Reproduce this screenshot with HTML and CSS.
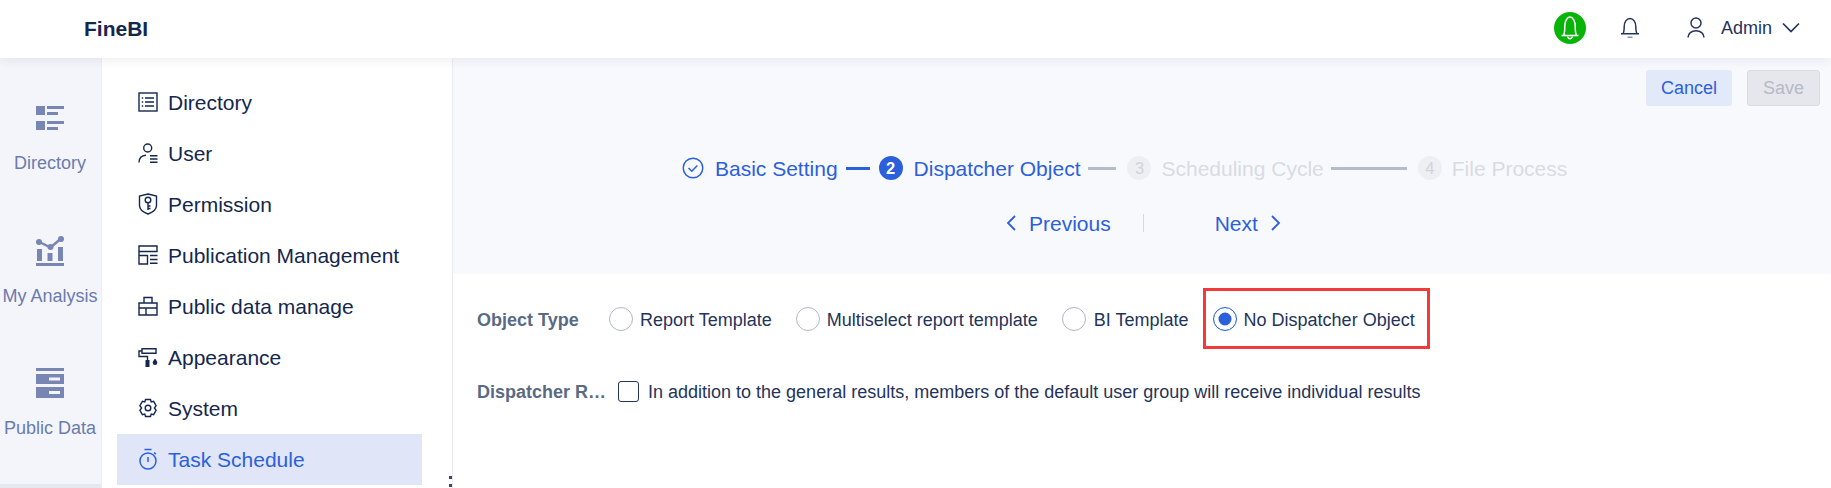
FILE: index.html
```html
<!DOCTYPE html>
<html lang="en">
<head>
<meta charset="utf-8">
<title>FineBI</title>
<link rel="stylesheet" href="styles.css">
</head>
<body>
<header class="topbar">
  <div class="brand">FineBI</div>
  <div class="top-actions">
    <span class="green-bell">
      <svg width="32" height="32" viewBox="0 0 32 32" fill="none" stroke="#fff" stroke-width="1.5"><path d="M7.500 23.500h17M9.500 23.500c1.200-2 1.300-4.500 1.300-9.500 0-4.500 2.200-9 5.200-9s5.200 4.500 5.200 9c0 5 .1 7.500 1.300 9.500"/><path d="M13.500 24.500c.5 1.500 1.300 2.200 2.500 2.200s2-.7 2.500-2.200"/></svg>
    </span>
    <svg class="plain-bell" width="20" height="22" viewBox="0 0 20 22" fill="none" stroke="#24345a" stroke-width="1.500"><path d="M1 16.800h18M3 16.500c1.200-1.500 1.200-3 1.200-7C4.200 5 6.500 1.500 10 1.500s5.800 3.500 5.800 8c0 4 0 5.500 1.200 7"/><path d="M7.500 20.300h5" stroke="#8a93ad"/></svg>
    <svg class="user-icon" width="18" height="21" viewBox="0 0 18 21" fill="none" stroke="#24345a" stroke-width="1.500"><circle cx="9" cy="6" r="5"/><path d="M1 20.500c0-4 3.500-6.800 8-6.800s8 2.800 8 6.800"/></svg>
    <span class="admin">Admin</span>
    <svg width="18" height="11" viewBox="0 0 18 11" fill="none" stroke="#24345a" stroke-width="1.700"><path d="M1 1.500l8 8 8-8"/></svg>
  </div>
</header>

<div class="shell">
  <nav class="rail">
    <a class="rail-item">
      <svg width="28" height="28" viewBox="0 0 28 28" fill="#7886b4"><rect y="2" width="9" height="9"/><rect y="17" width="9" height="9"/><rect x="11" y="2" width="17" height="3"/><rect x="11" y="8" width="11" height="3"/><rect x="11" y="17" width="17" height="3"/><rect x="11" y="23" width="11" height="3"/></svg>
      <span>Directory</span>
    </a>
    <a class="rail-item">
      <svg width="28" height="30" viewBox="0 0 28 30" fill="#7886b4"><path d="M3.500 6l11 5.500L24.500 3" fill="none" stroke="#7886b4" stroke-width="2.500"/><circle cx="3" cy="6" r="3"/><circle cx="14.500" cy="11" r="3"/><circle cx="25" cy="3" r="3"/><rect x="1" y="13" width="5" height="12"/><rect x="11.500" y="17" width="5" height="8"/><rect x="22" y="11" width="5" height="14"/><rect y="27" width="28" height="3"/></svg>
      <span>My Analysis</span>
    </a>
    <a class="rail-item">
      <svg width="28" height="30" viewBox="0 0 28 30"><rect width="28" height="3" fill="#7886b4"/><path fill="#7886b4" d="M0 6h28v10H0zM0 19h28v11H0z"/><rect x="13" y="9.500" width="11" height="3" fill="#f3f5fa"/><rect x="13" y="23" width="11" height="3" fill="#f3f5fa"/></svg>
      <span>Public Data</span>
    </a>
  </nav>

  <aside class="menu">
    <a class="menu-item">
      <svg width="20" height="20" viewBox="0 0 20 20" fill="none" stroke="#14274e" stroke-width="1.400"><rect x="1" y="1" width="18" height="18"/><path d="M7 6h9M7 10h9M7 14h9"/><path d="M3.800 6h1.400M3.800 10h1.400M3.800 14h1.400"/></svg>
      <span class="menu-text">Directory</span>
    </a>
    <a class="menu-item">
      <svg width="20" height="20" viewBox="0 0 20 20" fill="none" stroke="#14274e" stroke-width="1.400"><circle cx="9.700" cy="5" r="4"/><path d="M1 19.500c0-4.500 2.500-7 7-7.300"/><path d="M12 12.800h7.500M12 16h7.500M12 19.200h7.500"/></svg>
      <span class="menu-text">User</span>
    </a>
    <a class="menu-item">
      <svg width="20" height="22" viewBox="0 0 20 22" fill="none" stroke="#14274e" stroke-width="1.400"><path d="M10 1l8.500 2v9.500c0 4-4 6.800-8.500 8.500-4.500-1.700-8.500-4.500-8.500-8.500V3z"/><circle cx="10" cy="7" r="2.800"/><path d="M10 10v7M10 13h2.500M10 15.500h2.500"/></svg>
      <span class="menu-text">Permission</span>
    </a>
    <a class="menu-item">
      <svg width="20" height="20" viewBox="0 0 20 20" fill="none" stroke="#14274e" stroke-width="1.400"><path d="M1 1h18v5.500H1zM1 6.500V19h8.500V10.500H1"/><path d="M12 10.500h7.500M12 14.500h7.500M12 18.300h7.500"/></svg>
      <span class="menu-text">Publication Management</span>
    </a>
    <a class="menu-item">
      <svg width="20" height="20" viewBox="0 0 20 20" fill="none" stroke="#14274e" stroke-width="1.400"><path d="M1 7h18v12H1zM6 7V1.500h8V7M1 12h18M8 12v7"/></svg>
      <span class="menu-text">Public data manage</span>
    </a>
    <a class="menu-item">
      <svg width="20" height="20" viewBox="0 0 20 20" fill="#14274e"><path d="M4 1.700h14v4.600H4z" fill="none" stroke="#14274e" stroke-width="1.400"/><path d="M4 4H1v5.500h8.500V13" fill="none" stroke="#14274e" stroke-width="1.400"/><rect x="7.500" y="13" width="4" height="7"/><path d="M17 11.500c1.400 2 2.300 3 2.300 4.300a2.300 2.300 0 0 1-4.600 0c0-1.300.9-2.300 2.300-4.300z"/></svg>
      <span class="menu-text">Appearance</span>
    </a>
    <a class="menu-item">
      <svg width="20" height="20" viewBox="0 0 20 20" fill="none" stroke="#14274e" stroke-width="1.400"><path d="M7.500 1.500h5l.7 2.400 2.400-.6 2.500 4.300-1.700 2.400 1.700 2.400-2.500 4.300-2.400-.6-.7 2.400h-5l-.7-2.400-2.400.6-2.500-4.300L3.600 10 1.900 7.600l2.500-4.300 2.400.6z"/><circle cx="10" cy="10" r="2.800"/></svg>
      <span class="menu-text">System</span>
    </a>
    <a class="menu-item active">
      <svg width="20" height="22" viewBox="0 0 20 22" fill="none" stroke="#2c60db" stroke-width="1.500"><circle cx="10" cy="13" r="8"/><path d="M6.500 1.500h7M10 9v5M16 4.500l1.800 1.800"/></svg>
      <span class="menu-text">Task Schedule</span>
    </a>
    <span class="grip"></span>
  </aside>

  <main class="main">
    <section class="panel">
      <div class="toolbar">
        <button class="btn btn-cancel">Cancel</button>
        <button class="btn btn-save">Save</button>
      </div>
      <div class="steps">
        <span class="step done">
          <svg width="22" height="22" viewBox="0 0 22 22" fill="none" stroke="#2c60db" stroke-width="1.500"><circle cx="11" cy="11" r="9.800"/><path d="M6.500 11l3.300 3.300 5.500-5.800"/></svg>
          <span class="nudge">Basic Setting</span>
        </span>
        <i class="line line-a on"></i>
        <span class="step current"><b class="num">2</b><span class="nudge">Dispatcher Object</span></span>
        <i class="line line-b"></i>
        <span class="step todo"><b class="num">3</b><span class="nudge">Scheduling Cycle</span></span>
        <i class="line line-c"></i>
        <span class="step todo"><b class="num">4</b><span class="nudge">File Process</span></span>
      </div>
      <div class="pager">
        <a class="page-link prev">
          <svg width="10" height="18" viewBox="0 0 10 18" fill="none" stroke="#2c60db" stroke-width="1.800"><path d="M9 2L2 9l7 7"/></svg>
          <span class="nudge">Previous</span>
        </a>
        <i class="page-sep"></i>
        <a class="page-link next">
          <span class="nudge">Next</span>
          <svg width="10" height="18" viewBox="0 0 10 18" fill="none" stroke="#2c60db" stroke-width="1.800"><path d="M1 2l7 7-7 7"/></svg>
        </a>
      </div>
    </section>

    <section class="form">
      <div class="form-row">
        <span class="form-label nudge">Object Type</span>
        <label class="radio"><i class="dot"></i><span class="nudge">Report Template</span></label>
        <label class="radio"><i class="dot"></i><span class="nudge">Multiselect report template</span></label>
        <label class="radio roomy"><i class="dot"></i><span class="nudge">BI Template</span></label>
        <label class="radio picked"><i class="dot"></i><span class="nudge">No Dispatcher Object</span></label>
      </div>
      <div class="form-row">
        <span class="form-label nudge">Dispatcher R…</span>
        <label class="check"><i class="box"></i><span class="nudge">In addition to the general results, members of the default user group will receive individual results</span></label>
      </div>
    </section>
  </main>
</div>
</body>
</html>
```
FILE: styles.css
```css
* { box-sizing: border-box; }
html, body { margin: 0; height: 488px; overflow: hidden; }
body { font-family: "Liberation Sans", Arial, sans-serif; color: #14274e; background: #fff; }
i { font-style: normal; display: block; }
svg { display: block; flex: none; }
.nudge { padding-top: 2px; }

.topbar { position: relative; z-index: 2; height: 58px; background: #fff; display: flex; align-items: center; justify-content: space-between; padding: 0 31px 0 84px; box-shadow: 0 2px 10px rgba(40, 50, 90, .09); }
.brand { font-size: 21px; font-weight: 700; color: #14274e; }
.top-actions { display: flex; align-items: center; padding-bottom: 3px; }
.green-bell { width: 32px; height: 32px; border-radius: 50%; background: #09b409; margin-right: 34px; }
.plain-bell { margin-right: 47px; }
.user-icon { margin-right: 16px; }
.admin { font-size: 18px; color: #24345a; margin-right: 10px; padding-top: 2px; }

.shell { display: flex; height: 430px; }

.rail { width: 102px; flex: none; background: #f3f5fa; border-right: 1px solid #eceef4; border-bottom: 4px solid #e6e8ef; padding-top: 46px; }
.rail-item { height: 132px; display: flex; flex-direction: column; align-items: center; padding-right: 1px; font-size: 18px; line-height: 21px; color: #6b7bae; }
.rail-item span { white-space: nowrap; margin-top: 21px; }
.rail-item:nth-child(n+2) span { margin-top: 20px; }

.menu { position: relative; width: 351px; flex: none; background: #fff; border-right: 1px solid #e9ebf1; padding: 18.500px 30px 0 15px; }
.menu-item { height: 51px; display: flex; align-items: center; gap: 10.500px; padding-left: 20.500px; font-size: 21px; color: #14274e; white-space: nowrap; }
.menu-text { padding-top: 2px; }
.menu-item.active { background: #e0e6f8; color: #2c60db; }
.grip { position: absolute; right: 0; top: 418px; width: 3px; height: 11px; border-top: 3px solid #3a4660; border-bottom: 3px solid #3a4660; }

.main { flex: 1; min-width: 0; display: flex; flex-direction: column; }
.panel { height: 216px; background: #f8f9fd; padding-top: 12px; }
.toolbar { display: flex; justify-content: flex-end; gap: 15px; padding-right: 11px; }
.btn { height: 36px; border-radius: 3px; font: 18px "Liberation Sans", Arial, sans-serif; padding: 0; }
.btn-cancel { width: 86px; background: #e2e9f8; border: 0; color: #2c60db; }
.btn-save { width: 73px; background: #e5e7ec; border: 1px solid #d9dce3; color: #b4bac8; }

.steps { display: flex; align-items: center; height: 24px; margin: 50px 0 0 229px; font-size: 21px; white-space: nowrap; }
.step { display: flex; align-items: center; gap: 11px; }
.step.done { color: #2c60db; }
.step.current { color: #2c60db; }
.step.todo { color: #d8dbe3; gap: 10px; }
.num { width: 24px; height: 24px; border-radius: 50%; display: flex; align-items: center; justify-content: center; font-size: 16.500px; }
.current .num { background: #2c60db; color: #fff; }
.todo .num { background: #eeeff3; color: #d0d3dc; font-weight: 400; }
.line { height: 3px; background: #b5bbca; margin: 0 11px 0 8px; }
.line.on { background: #2c60db; }
.line-a { width: 24px; margin-right: 9px; }
.line-b { width: 28px; margin-right: 11px; }
.line-c { width: 76px; margin: 0 11px 0 7px; }

.pager { display: flex; align-items: center; height: 24px; margin: 31px 0 0 553px; font-size: 21px; color: #2c60db; }
.page-link { display: flex; align-items: center; gap: 13px; }
.page-sep { width: 1px; height: 18px; background: #d5d8e0; margin: 0 71px 0 32px; }

.form { padding: 33px 0 0 24px; font-size: 18px; color: #24345a; }
.form-row { display: flex; align-items: center; height: 24px; margin-bottom: 48.500px; white-space: nowrap; }
.form-label { width: 132px; flex: none; font-weight: 700; color: #5a6a84; }
.radio { position: relative; display: flex; align-items: center; gap: 7px; margin-right: 24px; }
.radio.roomy { gap: 8px; }
.dot { width: 24px; height: 24px; border-radius: 50%; border: 1px solid #b0b7c8; background: #fff; flex: none; }
.picked .dot { border-color: #2c60db; box-shadow: inset 0 0 0 4.500px #fff, inset 0 0 0 12px #2c60db; }
.picked::after { content: ""; position: absolute; left: -10px; right: -15px; top: -19px; bottom: -18px; border: 3px solid #f33a3a; }
.check { display: flex; align-items: center; gap: 9px; margin-left: 9px; }
.box { width: 21px; height: 21px; border: 1.500px solid #24345a; border-radius: 3px; background: #fff; flex: none; }
```
